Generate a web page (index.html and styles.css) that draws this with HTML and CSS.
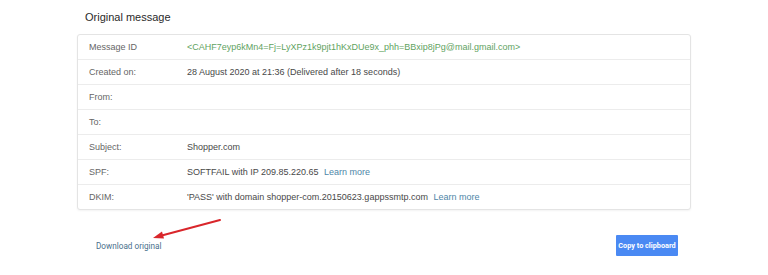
FILE: index.html
```html
<!DOCTYPE html>
<html>
<head>
<meta charset="utf-8">
<link rel="stylesheet" href="styles.css">
</head>
<body>
<div class="page">
  <h1 class="title">Original message</h1>
  <div class="card">
    <div class="row"><div class="label">Message ID</div><div class="value green">&lt;CAHF7eyp6kMn4=Fj=LyXPz1k9pjt1hKxDUe9x_phh=BBxip8jPg@mail.gmail.com&gt;</div></div>
    <div class="row"><div class="label">Created on:</div><div class="value">28 August 2020 at 21:36 (Delivered after 18 seconds)</div></div>
    <div class="row"><div class="label">From:</div><div class="value"></div></div>
    <div class="row"><div class="label">To:</div><div class="value"></div></div>
    <div class="row"><div class="label">Subject:</div><div class="value">Shopper.com</div></div>
    <div class="row"><div class="label">SPF:</div><div class="value">SOFTFAIL with IP 209.85.220.65 <a class="link">Learn more</a></div></div>
    <div class="row"><div class="label">DKIM:</div><div class="value">'PASS' with domain shopper-com.20150623.gappssmtp.com <a class="link">Learn more</a></div></div>
  </div>
  <div class="footer">
    <a class="download">Download original</a>
    <button class="copy">Copy to clipboard</button>
  </div>
</div>
<svg class="arrow" width="768" height="275" viewBox="0 0 768 275">
  <line x1="220" y1="220" x2="158" y2="236.5" stroke="#d9262b" stroke-width="2" stroke-linecap="round"/>
  <polygon points="153,238 162,231.5 164,238.5" fill="#d9262b"/>
</svg>
</body>
</html>
```
FILE: styles.css
```css
html, body {
  margin: 0;
  padding: 0;
  background: #fff;
}
body {
  font-family: "Liberation Sans", Arial, sans-serif;
  position: relative;
  width: 768px;
  height: 275px;
  overflow: hidden;
}
.page {
  padding: 10px 0 0 77px;
  width: 614px;
}
.title {
  margin: 0 0 10px 0;
  padding-left: 8px;
  font-size: 11px;
  line-height: 14px;
  font-weight: normal;
  color: #2a2a2a;
}
.card {
  border: 1px solid #e4e4e4;
  border-radius: 3px;
  box-shadow: 0 1px 2px rgba(0,0,0,0.05);
  background: #fff;
}
.row {
  display: flex;
  align-items: center;
  height: 24px;
  border-bottom: 1px solid #ececec;
  font-size: 9px;
}
.row:last-child {
  border-bottom: none;
}
.label {
  width: 98px;
  padding-left: 11px;
  color: #666;
  flex: none;
}
.value {
  color: #484848;
}
.green {
  color: #5fa35f;
}
.link {
  color: #4e86a8;
  margin-left: 3px;
}
.footer {
  display: flex;
  justify-content: space-between;
  align-items: center;
  margin-top: 25px;
  padding: 0 13px 0 19px;
}
.download {
  font-family: Roboto, "Liberation Sans", sans-serif;
  font-size: 8.2px;
  color: #4a6f8c;
}
.copy {
  width: 62px;
  height: 21px;
  padding: 0;
  border: none;
  border-radius: 1px;
  background: #4a89f3;
  color: #fff;
  font-family: Roboto, "Liberation Sans", sans-serif;
  font-weight: bold;
  font-size: 7.3px;
}
.arrow {
  position: absolute;
  left: 0;
  top: 0;
  pointer-events: none;
}
```
